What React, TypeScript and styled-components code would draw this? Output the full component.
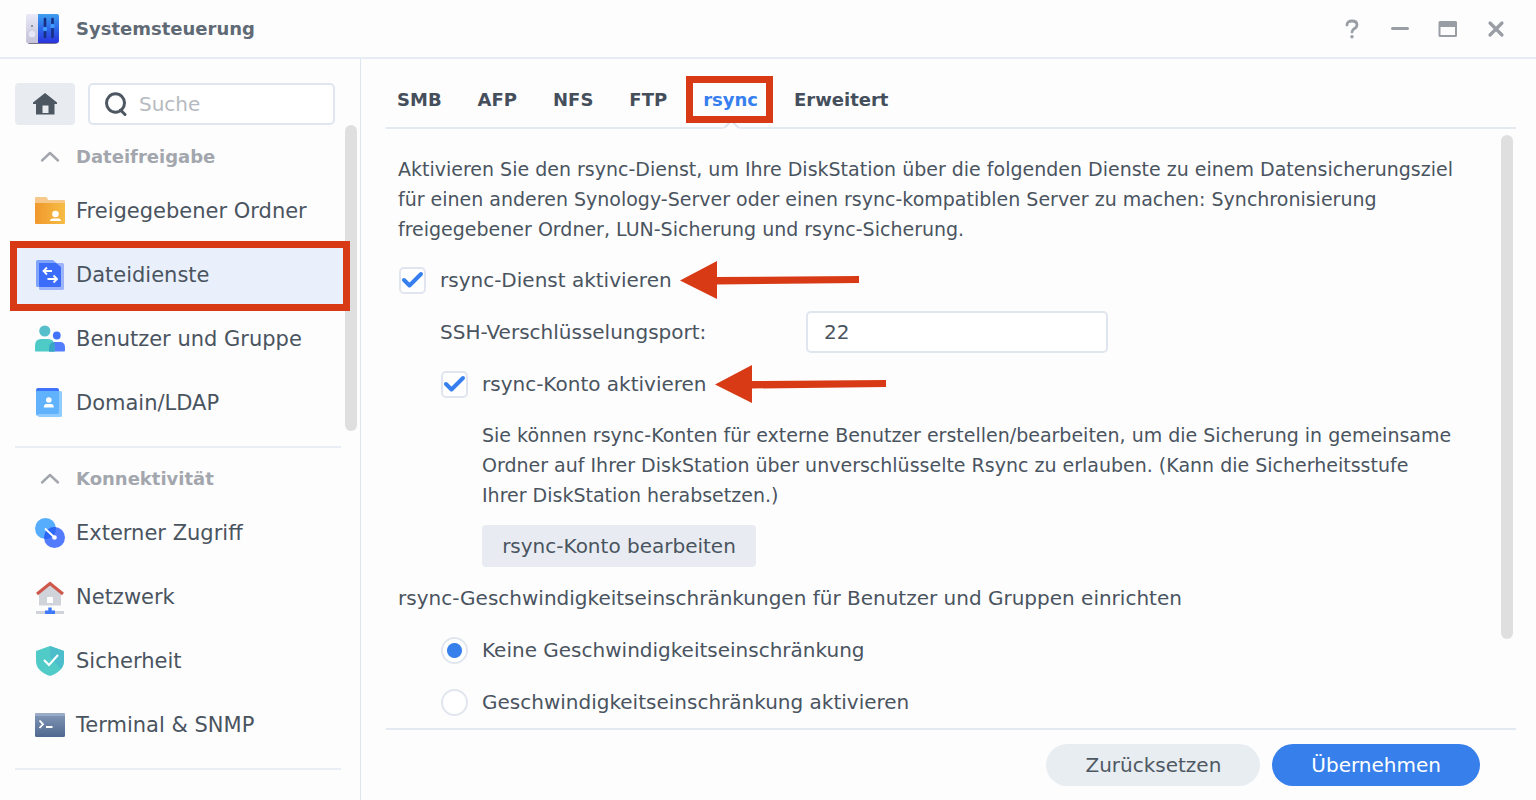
import React, { useState } from 'react';
import styled, { createGlobalStyle, css } from 'styled-components';

const GlobalStyle = createGlobalStyle`
  *, *::before, *::after { box-sizing: border-box; }
  body {
    margin: 0;
    background: #fdfdfe;
    color: #4a545f;
    font-family: Verdana, "DejaVu Sans", sans-serif;
    font-size: 20px;
  }
  button, input { font: inherit; color: inherit; }
  button { cursor: pointer; }
`;

const Window = styled.div`
  display: flex;
  flex-direction: column;
  height: 100vh;
  min-height: 800px;
`;

const TitleBar = styled.header`
  display: flex;
  align-items: center;
  flex: none;
  height: 59px;
  padding: 0 16px 0 26px;
  border-bottom: 2px solid #e6ecf4;
`;

const Title = styled.h1`
  flex: 1;
  margin: 0 0 0 16px;
  font-size: 18px;
  line-height: 24px;
  font-weight: 700;
  color: #606a75;
`;

const WindowControls = styled.div`
  display: flex;
`;

const ControlButton = styled.button`
  display: grid;
  place-items: center;
  width: 48px;
  height: 40px;
  padding: 0;
  border: 0;
  background: none;
`;

const Columns = styled.div`
  display: flex;
  flex: 1;
  min-height: 0;
`;

const Sidebar = styled.aside`
  display: flex;
  flex-direction: column;
  flex: none;
  width: 361px;
  padding: 24px 3px 0 15px;
  border-right: 1px solid #dde5ef;
`;

const SidebarTools = styled.div`
  display: flex;
  gap: 13px;
  padding-right: 22px;
`;

const HomeButton = styled.button`
  display: grid;
  place-items: center;
  flex: none;
  width: 60px;
  height: 42px;
  padding: 0;
  border: 0;
  border-radius: 4px;
  background: #e8ecf1;
`;

const SearchBox = styled.label`
  display: flex;
  align-items: center;
  flex: 1;
  min-width: 0;
  height: 42px;
  padding: 0 15px;
  gap: 12px;
  border: 2px solid #e0e6f0;
  border-radius: 5px;
  background: #fff;
`;

const SearchInput = styled.input`
  flex: 1;
  min-width: 0;
  padding: 0;
  border: 0;
  outline: 0;
  background: none;
  &::placeholder { color: #b6bac0; opacity: 1; }
`;

const SidebarBody = styled.div`
  display: flex;
  flex: 1;
  min-height: 0;
  gap: 4px;
`;

const Nav = styled.nav`
  flex: 1;
  min-width: 0;
  padding-top: 1px;
`;

const NavGroup = styled.section`
  padding: 9px 0 11px;
  border-bottom: 2px solid #e8eef4;
`;

const GroupHeading = styled.h2`
  display: flex;
  align-items: center;
  gap: 10px;
  height: 44px;
  margin: 0;
  padding-left: 19px;
  font-size: 18px;
  line-height: 24px;
  font-weight: 700;
  color: #a3a7ad;
`;

const NavLink = styled.a<{ $active?: boolean }>`
  position: relative;
  display: flex;
  align-items: center;
  gap: 10px;
  height: 64px;
  margin-right: -2px;
  padding-left: 19px;
  font-size: 21px;
  white-space: nowrap;
  color: inherit;
  text-decoration: none;
  ${(p) => p.$active && css`background: #e9f0fc;`}
`;

const marker = css`
  content: "";
  position: absolute;
  border: 7px solid #d73a14;
  pointer-events: none;
`;

const MarkedNavLink = styled(NavLink)`
  &::after {
    ${marker}
    inset: -2px -7px -4px -5px;
    z-index: 1;
  }
`;

const ScrollThumb = styled.div<{ $size: string }>`
  flex: none;
  width: 12px;
  height: ${(p) => p.$size};
  border-radius: 6px;
  background: #dfdfdf;
`;

const Main = styled.main`
  display: flex;
  flex-direction: column;
  flex: 1;
  min-width: 0;
  padding: 0 20px 0 25px;
`;

const TabList = styled.div`
  display: flex;
  flex: none;
  gap: 36px;
  height: 70px;
  padding: 0 11px;
  border-bottom: 2px solid #e3e9f1;
`;

const Tab = styled.button<{ $active: boolean }>`
  position: relative;
  padding: 25px 0 11px;
  border: 0;
  background: none;
  font-size: 18px;
  line-height: 32px;
  font-weight: 700;
  color: ${(p) => (p.$active ? '#377fee' : '#454f5b')};
  ${(p) => p.$active && css`
    &::before {
      content: "";
      position: absolute;
      left: 50%;
      bottom: -8px;
      width: 13px;
      height: 13px;
      margin-left: -6px;
      border: 2px solid #dde4ee;
      border-color: #dde4ee transparent transparent #dde4ee;
      background: #fdfdfe;
      transform: rotate(45deg);
    }
    &::after {
      ${marker}
      inset: 17px -15px 4px -17px;
    }
  `}
`;

const Content = styled.div`
  display: flex;
  flex: 1;
  min-height: 0;
  padding: 6px 3px 0 12px;
`;

const Form = styled.form`
  display: flex;
  flex-direction: column;
  gap: 10px;
  flex: 1;
  min-width: 0;
  padding-top: 14px;
`;

const Paragraph = styled.p<{ $level?: number }>`
  margin: 5px 0 5px ${(p) => (p.$level || 0) * 42}px;
  font-size: 19px;
  line-height: 30px;
`;

const Row = styled.div<{ $level?: number }>`
  display: flex;
  align-items: center;
  height: 42px;
  padding-left: ${(p) => (p.$level || 0) * 42}px;
  white-space: nowrap;
`;

const Choice = styled.label`
  display: flex;
  align-items: center;
  gap: 14px;
  padding-left: 1px;
`;

const TickHolder = styled.span`
  display: grid;
  place-items: center;
  width: 27px;
  height: 27px;
  > * { grid-area: 1 / 1; }
  > svg { visibility: hidden; pointer-events: none; z-index: 1; }
  > input:checked + svg { visibility: visible; }
`;

const Tick = styled.input`
  appearance: none;
  width: 27px;
  height: 27px;
  margin: 0;
  border: 2px solid #e0e5ef;
  border-radius: 5px;
  background: #fff;
`;

const Radio = styled.input`
  appearance: none;
  width: 27px;
  height: 27px;
  margin: 0;
  border: 2px solid #e1e6ee;
  border-radius: 50%;
  background: #fff;
  &:checked { background: radial-gradient(circle, #377fea 7px, #fff 8px); }
`;

const FieldLabel = styled.label`
  width: 366px;
`;

const TextInput = styled.input`
  width: 302px;
  height: 42px;
  padding: 0 16px;
  border: 2px solid #dfe6ef;
  border-radius: 5px;
  background: #fff;
`;

const PlainButton = styled.button`
  width: 274px;
  height: 42px;
  padding: 0;
  border: 0;
  border-radius: 4px;
  background: #e8ecf2;
`;

const Footer = styled.footer`
  display: flex;
  justify-content: flex-end;
  flex: none;
  gap: 12px;
  height: 72px;
  padding: 14px 36px 0 0;
  border-top: 2px solid #e3e9f1;
`;

const PillButton = styled.button<{ $primary?: boolean }>`
  height: 42px;
  padding: 0 39px;
  border: 0;
  border-radius: 21px;
  background: ${(p) => (p.$primary ? '#377fea' : '#e8edf2')};
  color: ${(p) => (p.$primary ? '#fff' : '#4f5963')};
`;

const Pointer = styled.svg`
  flex: none;
  margin-left: 8px;
`;

const Arrow = ({ length }: { length: number }) => (
  <Pointer width={length} height="38" viewBox={`0 0 ${length} 38`} fill="#d73a14" aria-hidden="true">
    <path d={`M0 19.500 37 0V16L${length} 15V22L37 23.500V38Z`} />
  </Pointer>
);

const AppIcon = () => (
  <svg width="34" height="32" viewBox="0 0 34 32" aria-hidden="true">
    <defs>
      <linearGradient id="panelBlue" x1="0" y1="0" x2="0" y2="1">
        <stop offset="0" stopColor="#3f9ff0" />
        <stop offset=".55" stopColor="#2b62e8" />
        <stop offset="1" stopColor="#2a33dc" />
      </linearGradient>
      <linearGradient id="panelGrey" x1="0" y1="0" x2="0" y2="1">
        <stop offset="0" stopColor="#e9e9f7" />
        <stop offset="1" stopColor="#c3c2d8" />
      </linearGradient>
    </defs>
    <rect x="1" y="3" width="31" height="28" rx="3" fill="#77758c" />
    <path d="M2 1H12V30H2Q0 30 0 28V3Q0 1 2 1Z" fill="url(#panelGrey)" />
    <path d="M12 1H31Q33 1 33 3V28Q33 30 31 30H12Z" fill="url(#panelBlue)" />
    <circle cx="6" cy="13" r="1" fill="#77778a" />
    <circle cx="6" cy="21" r="4" fill="#e6e6f8" stroke="#b8b8d0" strokeWidth=".6" />
    <path d="M19 6V24M26.500 6V24" stroke="#172f83" strokeWidth="2.600" strokeLinecap="round" />
    <circle cx="19" cy="16" r="2.200" fill="#3f9bff" />
    <circle cx="26.500" cy="13" r="2.200" fill="#3f9bff" />
  </svg>
);

const HomeIcon = () => (
  <svg width="24" height="22" viewBox="0 0 24 22" fill="#4d5762" fillRule="evenodd" aria-hidden="true">
    <path d="M12 0 24 9.500V11H21.500V21.500H3V11H0V9.500ZM9.500 12.500V20H15.500V12.500Z" />
  </svg>
);

const SearchIcon = () => (
  <svg width="22" height="24" viewBox="0 0 22 24" fill="none" stroke="#4d5762" strokeWidth="3" strokeLinecap="round" aria-hidden="true">
    <ellipse cx="10.500" cy="11" rx="9" ry="9.200" />
    <path d="M15.500 18 20 22.500" />
  </svg>
);

const Chevron = () => (
  <svg width="32" height="12" viewBox="0 0 32 12" fill="none" stroke="#a3a7ad" strokeWidth="2.400" strokeLinecap="round" strokeLinejoin="round" aria-hidden="true">
    <path d="M8 9.500 16 2 24 9.500" />
  </svg>
);

const CheckMark = () => (
  <svg width="23" height="18" viewBox="0 0 23 18" fill="none" stroke="#377fee" strokeWidth="4" strokeLinecap="round" strokeLinejoin="round" aria-hidden="true">
    <path d="M3 9 8.500 14.500 20 3" />
  </svg>
);

const navIcons: Record<string, React.ReactNode> = {
  folder: (
    <>
      <defs>
        <linearGradient id="folder">
          <stop offset="0" stopColor="#f0982d" />
          <stop offset="1" stopColor="#f6bd45" />
        </linearGradient>
      </defs>
      <path d="M2 2H12Q13 2 14 5H30Q31 5 31 6V12H1V3Q1 2 2 2Z" fill="#f6c88a" />
      <path d="M1 8H31V28Q31 29 30 29H2Q1 29 1 28Z" fill="url(#folder)" />
      <circle cx="21.500" cy="19" r="3.300" fill="#fff" />
      <path d="M16 26Q16 23.500 18.500 23.500H24.500Q27 23.500 27 26Z" fill="#fff" />
    </>
  ),
  files: (
    <>
      <rect x="5" y="4" width="25" height="27" rx="1.500" fill="#9db4fb" />
      <path d="M3.500 1H19L27 8V28H3.500Q2 28 2 26.500V2.500Q2 1 3.500 1Z" fill="#7fa4fa" />
      <path d="M5 4H22L27 8V26.500Q27 28 25.500 28H6.500Q5 28 5 26.500Z" fill="#3c6dfa" />
      <path d="M18 12H9.500M13 8.500 9.500 12 13 15.500M13.500 20H23M19.500 16.500 23 20 19.500 23.500" fill="none" stroke="#fff" strokeWidth="1.800" />
    </>
  ),
  users: (
    <>
      <circle cx="10.800" cy="8" r="5.600" fill="#57bfcc" />
      <circle cx="22.800" cy="12.500" r="3.900" fill="#4273fb" />
      <path d="M15 28V25Q15 19 20 19H26Q31 19 31 24.500V27.500Q31 28.500 30 28.500H15Z" fill="#527dfb" />
      <path d="M1 28V23Q1 16 7 16H14Q20.500 16 20.500 23V28.500H2Q1 28.500 1 27.500Z" fill="#4ecac7" />
      <path d="M15 28.500V25Q15 21 18 19.500H20Q20.500 21 20.500 23V28.500Z" fill="#39a5c5" />
    </>
  ),
  domain: (
    <>
      <rect x="4" y="4" width="24" height="26" rx="1.500" fill="#8fcbff" />
      <path d="M4 1H23Q25 1 25 3V6H2V3Q2 1 4 1Z" fill="#3f74fa" />
      <path d="M2 3Q2 4 4 4H25V25Q25 27 23.500 27H5Q3.500 27 3.500 29Q2 28.500 2 27Z" fill="#60b2fd" />
      <circle cx="14.800" cy="13" r="2.800" fill="#fff" />
      <path d="M9.800 20.500Q9.800 17 12.300 17H17.300Q19.800 17 19.800 20.500Z" fill="#fff" />
    </>
  ),
  external: (
    <>
      <circle cx="11.500" cy="11.500" r="10.500" fill="#56adfd" />
      <circle cx="20.500" cy="20.500" r="10.500" fill="#537bfd" />
      <path d="M20.500 10A10.500 10.500 0 0 0 10 20.500L10.200 21.900A10.500 10.500 0 0 0 21.900 10.100Z" fill="#2a68f5" />
      <path d="M11 11.500 20 20" stroke="#fff" strokeWidth="1.800" />
      <circle cx="20.500" cy="20.500" r="2.300" fill="#fff" />
    </>
  ),
  network: (
    <>
      <path d="M5 12 16 3 27 12V24.500H5Z" fill="#d0d3d9" />
      <rect x="13" y="16" width="6" height="6" rx=".5" fill="#fff" />
      <path d="M3 13 16 2.500 29 13" fill="none" stroke="#cf584c" strokeWidth="3" />
      <rect x="2" y="30" width="28" height="3" fill="#d0d4da" />
      <path d="M14.300 26.500H17.700V29.500H21V33H11V29.500H14.300Z" fill="#3e78fb" />
    </>
  ),
  shield: (
    <>
      <path d="M16 1 30 6V16Q30 26 16 31Q2 26 2 16V6Z" fill="#50cbc8" />
      <path d="M16 1 30 6V16Q30 20 27 24L16 12Z" fill="#4cbecb" />
      <path d="M10 15 15 20 24 10" fill="none" stroke="#fff" strokeWidth="2" />
    </>
  ),
  terminal: (
    <>
      <defs>
        <linearGradient id="terminal" x1="0" y1="0" x2="0" y2="1">
          <stop offset="0" stopColor="#8499b8" />
          <stop offset="1" stopColor="#4f688f" />
        </linearGradient>
      </defs>
      <rect x="1" y="4" width="30" height="24" rx="1.500" fill="url(#terminal)" />
      <path d="M1 7V5.500Q1 4 2.500 4H29.500Q31 4 31 5.500V7Z" fill="#9aabc8" />
      <path d="M5.500 11.500 9 15.300 5.500 19M12 18H18.500" fill="none" stroke="#fff" strokeWidth="1.800" />
    </>
  ),
};

const NavIcon = ({ name }: { name: string }) => (
  <svg width="32" height="32" viewBox="0 0 32 32" overflow="visible" aria-hidden="true">
    {navIcons[name]}
  </svg>
);

const groups = [
  {
    title: 'Dateifreigabe',
    items: [
      { icon: 'folder', label: 'Freigegebener Ordner' },
      { icon: 'files', label: 'Dateidienste', active: true },
      { icon: 'users', label: 'Benutzer und Gruppe' },
      { icon: 'domain', label: 'Domain/LDAP' },
    ],
  },
  {
    title: 'Konnektivität',
    items: [
      { icon: 'external', label: 'Externer Zugriff' },
      { icon: 'network', label: 'Netzwerk' },
      { icon: 'shield', label: 'Sicherheit' },
      { icon: 'terminal', label: 'Terminal & SNMP' },
    ],
  },
];

const tabs = ['SMB', 'AFP', 'NFS', 'FTP', 'rsync', 'Erweitert'];

export default function App() {
  const [tab, setTab] = useState('rsync');
  return (
    <>
      <GlobalStyle />
      <Window>
        <TitleBar>
          <AppIcon />
          <Title>Systemsteuerung</Title>
          <WindowControls>
            <ControlButton aria-label="Hilfe">
              <svg width="14" height="20" viewBox="0 0 14 20" fill="none" stroke="#999ea5" strokeWidth="2.800" strokeLinecap="round">
                <path d="M2 6Q2 2 7 2Q12 2 12 6Q12 8 9.500 9.500Q7 11 7 13" />
                <circle cx="7" cy="17.700" r="1.700" fill="#999ea5" stroke="none" />
              </svg>
            </ControlButton>
            <ControlButton aria-label="Minimieren">
              <svg width="20" height="4" viewBox="0 0 20 4"><rect x="1" y="0" width="18" height="3" rx="1.500" fill="#999ea5" /></svg>
            </ControlButton>
            <ControlButton aria-label="Maximieren">
              <svg width="20" height="16" viewBox="0 0 20 16" fill="none" stroke="#999ea5">
                <rect x="1.500" y="1" width="16.500" height="14" rx=".5" strokeWidth="2" />
                <path d="M1 3.500H18.500" strokeWidth="5" />
              </svg>
            </ControlButton>
            <ControlButton aria-label="Schließen">
              <svg width="18" height="18" viewBox="0 0 18 18" fill="none" stroke="#999ea5" strokeWidth="3.200" strokeLinecap="round">
                <path d="M3 3 15 15M15 3 3 15" />
              </svg>
            </ControlButton>
          </WindowControls>
        </TitleBar>
        <Columns>
          <Sidebar>
            <SidebarTools>
              <HomeButton aria-label="Startseite"><HomeIcon /></HomeButton>
              <SearchBox>
                <SearchIcon />
                <SearchInput type="text" placeholder="Suche" aria-label="Suche" />
              </SearchBox>
            </SidebarTools>
            <SidebarBody>
              <Nav>
                {groups.map((group) => (
                  <NavGroup key={group.title}>
                    <GroupHeading><Chevron />{group.title}</GroupHeading>
                    {group.items.map((item) => {
                      const Link = item.active ? MarkedNavLink : NavLink;
                      return (
                        <Link key={item.label} href="#" $active={item.active}>
                          <NavIcon name={item.icon} />
                          {item.label}
                        </Link>
                      );
                    })}
                  </NavGroup>
                ))}
              </Nav>
              <ScrollThumb $size="306px" />
            </SidebarBody>
          </Sidebar>
          <Main>
            <TabList role="tablist">
              {tabs.map((name) => (
                <Tab key={name} type="button" role="tab" aria-selected={name === tab} $active={name === tab} onClick={() => setTab(name)}>
                  {name}
                </Tab>
              ))}
            </TabList>
            <Content>
              <Form onSubmit={(e) => e.preventDefault()}>
                <Paragraph>
                  Aktivieren Sie den rsync-Dienst, um Ihre DiskStation über die folgenden Dienste zu einem Datensicherungsziel
                  <br />
                  für einen anderen Synology-Server oder einen rsync-kompatiblen Server zu machen: Synchronisierung
                  <br />
                  freigegebener Ordner, LUN-Sicherung und rsync-Sicherung.
                </Paragraph>
                <Row>
                  <Choice>
                    <TickHolder><Tick type="checkbox" defaultChecked /><CheckMark /></TickHolder>
                    rsync-Dienst aktivieren
                  </Choice>
                  <Arrow length={179} />
                </Row>
                <Row $level={1}>
                  <FieldLabel htmlFor="ssh-port">SSH-Verschlüsselungsport:</FieldLabel>
                  <TextInput id="ssh-port" type="text" defaultValue="22" />
                </Row>
                <Row $level={1}>
                  <Choice>
                    <TickHolder><Tick type="checkbox" defaultChecked /><CheckMark /></TickHolder>
                    rsync-Konto aktivieren
                  </Choice>
                  <Arrow length={171} />
                </Row>
                <Paragraph $level={2}>
                  Sie können rsync-Konten für externe Benutzer erstellen/bearbeiten, um die Sicherung in gemeinsame
                  <br />
                  Ordner auf Ihrer DiskStation über unverschlüsselte Rsync zu erlauben. (Kann die Sicherheitsstufe
                  <br />
                  Ihrer DiskStation herabsetzen.)
                </Paragraph>
                <Row $level={2}><PlainButton type="button">rsync-Konto bearbeiten</PlainButton></Row>
                <Row>rsync-Geschwindigkeitseinschränkungen für Benutzer und Gruppen einrichten</Row>
                <Row $level={1}>
                  <Choice><Radio type="radio" name="speed" defaultChecked />Keine Geschwindigkeitseinschränkung</Choice>
                </Row>
                <Row $level={1}>
                  <Choice><Radio type="radio" name="speed" />Geschwindigkeitseinschränkung aktivieren</Choice>
                </Row>
              </Form>
              <ScrollThumb $size="504px" />
            </Content>
            <Footer>
              <PillButton type="button">Zurücksetzen</PillButton>
              <PillButton type="button" $primary>Übernehmen</PillButton>
            </Footer>
          </Main>
        </Columns>
      </Window>
    </>
  );
}
